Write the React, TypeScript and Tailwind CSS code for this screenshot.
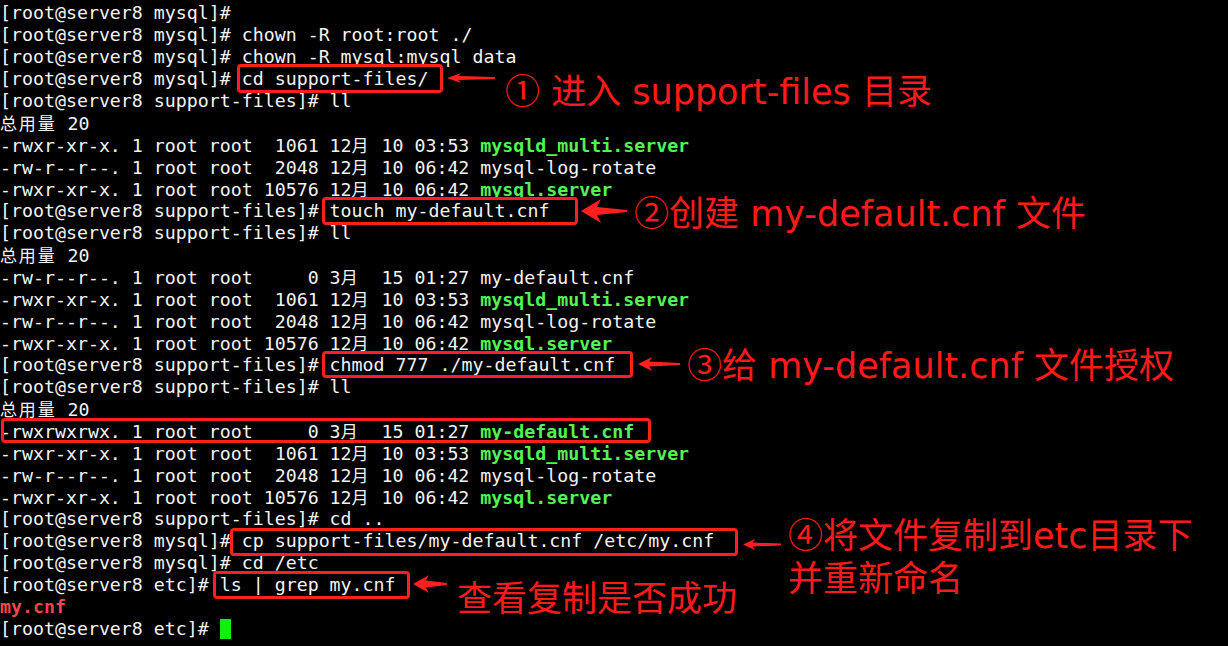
const GREEN = 'text-[#55f255] font-bold'

type Seg = { t: string; c?: string }
type Line = Seg[]

const P_MYSQL = '[root@server8 mysql]# '
const P_SF = '[root@server8 support-files]# '
const P_ETC = '[root@server8 etc]# '

const LS_OLD: Line[] = [
  [{ t: '-rwxr-xr-x. 1 root root  1061 12月 10 03:53 ' }, { t: 'mysqld_multi.server', c: GREEN }],
  [{ t: '-rw-r--r--. 1 root root  2048 12月 10 06:42 mysql-log-rotate' }],
  [{ t: '-rwxr-xr-x. 1 root root 10576 12月 10 06:42 ' }, { t: 'mysql.server', c: GREEN }],
]

const LINES: Line[] = [
  [{ t: '[root@server8 mysql]#' }],
  [{ t: P_MYSQL + 'chown -R root:root ./' }],
  [{ t: P_MYSQL + 'chown -R mysql:mysql data' }],
  [{ t: P_MYSQL + 'cd support-files/' }],
  [{ t: P_SF + 'll' }],
  [{ t: '总用量 20' }],
  ...LS_OLD,
  [{ t: P_SF + 'touch my-default.cnf' }],
  [{ t: P_SF + 'll' }],
  [{ t: '总用量 20' }],
  [{ t: '-rw-r--r--. 1 root root     0 3月  15 01:27 my-default.cnf' }],
  ...LS_OLD,
  [{ t: P_SF + 'chmod 777 ./my-default.cnf' }],
  [{ t: P_SF + 'll' }],
  [{ t: '总用量 20' }],
  [{ t: '-rwxrwxrwx. 1 root root     0 3月  15 01:27 ' }, { t: 'my-default.cnf', c: GREEN }],
  ...LS_OLD,
  [{ t: P_SF + 'cd ..' }],
  [{ t: P_MYSQL + 'cp support-files/my-default.cnf /etc/my.cnf' }],
  [{ t: P_MYSQL + 'cd /etc' }],
  [{ t: P_ETC + 'ls | grep my.cnf' }],
  [{ t: 'my.cnf', c: 'text-[#f04848] font-bold' }],
  [{ t: P_ETC }],
]

// CJK chars take two terminal cells
function Cells({ text }: { text: string }) {
  const parts: React.ReactNode[] = []
  let buf = ''
  Array.from(text).forEach((ch, i) => {
    if (ch.charCodeAt(0) > 0x2e80) {
      if (buf) parts.push(buf)
      buf = ''
      parts.push(
        <span key={i} className="inline-block w-[2ch] text-left font-['Noto_Sans_CJK_SC',sans-serif] text-[17px]">
          {ch}
        </span>
      )
    } else {
      buf += ch
    }
  })
  if (buf) parts.push(buf)
  return <>{parts}</>
}

// red highlight boxes drawn over the terminal
const BOXES = [
  { l: 237, t: 64, w: 206, h: 29 },
  { l: 322, t: 197, w: 256, h: 28 },
  { l: 322, t: 351, w: 311, h: 27 },
  { l: 1, t: 418, w: 650, h: 25 },
  { l: 230, t: 528, w: 508, h: 28 },
  { l: 213, t: 571, w: 197, h: 28 },
]

const ARROWS = [
  { x: 447, cy: 78, len: 48, h: 10, hl: 14, s: 4 },
  { x: 581, cy: 211, len: 46, h: 24, hl: 20, s: 8 },
  { x: 638, cy: 364, len: 42, h: 14, hl: 14, s: 5 },
  { x: 743, cy: 544, len: 38, h: 11, hl: 12, s: 4 },
  { x: 413, cy: 584, len: 34, h: 18, hl: 16, s: 7 },
]

function Arrow({ x, cy, len, h, hl, s }: { x: number; cy: number; len: number; h: number; hl: number; s: number }) {
  const c = h / 2
  const pts = [
    [0, c],
    [hl, 0],
    [hl * 0.8, c - s / 2],
    [len, c - 1],
    [len, c + 1],
    [hl * 0.8, c + s / 2],
    [hl, h],
  ]
    .map((p) => p.join(','))
    .join(' ')
  return (
    <svg className="absolute" style={{ left: x, top: cy - c }} width={len} height={h} viewBox={`0 0 ${len} ${h}`}>
      <polygon points={pts} fill="#ff1f1f" />
    </svg>
  )
}

const Num = ({ n }: { n: string }) => <span className="font-['Noto_Sans_CJK_SC',sans-serif]">{n}</span>

export default function App() {
  return (
    <div className="relative w-[1228px] h-[646px] bg-black overflow-hidden">
      {/* terminal */}
      <div className="pt-[2px] font-['DejaVu_Sans_Mono',monospace] text-[18.25px] leading-[22px] text-[#f4f4f4] whitespace-pre">
        {LINES.map((line, i) => (
          <div key={i} className="h-[22px]">
            {line.map((seg, j) => (
              <span key={j} className={seg.c}>
                <Cells text={seg.t} />
              </span>
            ))}
            {i === LINES.length - 1 && (
              <span className="inline-block w-[11px] h-[20px] align-[-4px] bg-[#11ee11]" />
            )}
          </div>
        ))}
      </div>

      {/* annotations */}
      {BOXES.map((b, i) => (
        <div
          key={i}
          className="absolute border-[3px] border-[#ff1f1f] rounded-[4px]"
          style={{ left: b.l, top: b.t, width: b.w, height: b.h }}
        />
      ))}
      {ARROWS.map((a, i) => (
        <Arrow key={i} {...a} />
      ))}

      <div className="font-['DejaVu_Sans','Noto_Sans_CJK_SC',sans-serif] text-[35px] leading-[44px] text-[#ff1a1a] whitespace-pre">
        <div className="absolute left-[505px] top-[67px]"><Num n="①" /> 进入 support-files 目录</div>
        <div className="absolute left-[634px] top-[189px]"><Num n="②" />创建 my-default.cnf 文件</div>
        <div className="absolute left-[687px] top-[341px]"><Num n="③" />给 my-default.cnf 文件授权</div>
        <div className="absolute left-[788px] top-[511px] leading-[43px]">
          <div><Num n="④" />将文件复制到etc目录下</div>
          <div>并重新命名</div>
        </div>
        <div className="absolute left-[457px] top-[577px]">查看复制是否成功</div>
      </div>
    </div>
  )
}
